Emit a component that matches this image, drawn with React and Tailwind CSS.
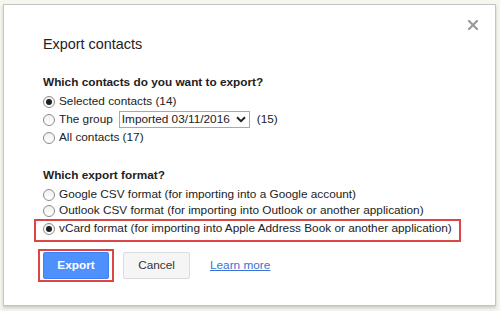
import React from "react";

function Radio({ checked }) {
  return (
    <span className="w-[12px] h-[12px] rounded-full border border-[#8c8c8c] bg-gradient-to-b from-[#f0f0f0] to-white flex items-center justify-center shrink-0">
      {checked && <span className="w-[6px] h-[6px] rounded-full bg-[#1f1f1f]" />}
    </span>
  );
}

function Option({ checked, children, className = "h-[17px]" }) {
  return (
    <div className={`flex items-center gap-[4px] ${className}`}>
      <Radio checked={checked} />
      <span className="leading-none">{children}</span>
    </div>
  );
}

export default function App() {
  return (
    <div
      className="w-[500px] h-[311px] bg-[#f6f6ef] pt-[4px] pl-[3px] overflow-hidden text-[#222] text-[11.8px]"
      style={{ fontFamily: '"Liberation Sans", Arial, sans-serif' }}
    >
      <div className="relative w-[493px] h-[302px] bg-white border border-[#c4c4c4] shadow-[0_2px_3px_rgba(0,0,0,0.18)] pl-[39px] pt-[30px]">
        <svg className="absolute left-[464px] top-[15px]" width="10" height="10" viewBox="0 0 10 10">
          <path d="M1 1 L9 9 M9 1 L1 9" stroke="#9a9a9a" strokeWidth="2.2" strokeLinecap="square" />
        </svg>

        <div className="h-[18px] leading-[18px] text-[14.4px]">Export contacts</div>

        <div className="mt-[22px] h-[14px] leading-[14px] font-bold">Which contacts do you want to export?</div>

        <div className="mt-[4px]">
          <Option checked>Selected contacts (14)</Option>
          <div className="flex items-center h-[19px]">
            <Radio />
            <span className="ml-[4px] leading-none">The group</span>
            <div className="ml-[6px] w-[131px] h-[17px] border border-[#a9a9a9] bg-white flex items-center justify-between pl-[2px] pr-[3px]">
              <span className="leading-none">Imported 03/11/2016</span>
              <svg width="10" height="7" viewBox="0 0 10 7">
                <path d="M1 1.2 L5 5.2 L9 1.2" fill="none" stroke="#222" strokeWidth="2" />
              </svg>
            </div>
            <span className="ml-[7px] leading-none">(15)</span>
          </div>
          <Option>All contacts (17)</Option>
        </div>

        <div className="mt-[22px] h-[14px] leading-[14px] font-bold">Which export format?</div>

        <div className="mt-[5px]">
          <Option className="h-[16px]">Google CSV format (for importing into a Google account)</Option>
          <Option className="h-[16px]">Outlook CSV format (for importing into Outlook or another application)</Option>
          <div className="-ml-[9px] w-[427px] h-[23px] border-2 border-[#dd4444] pl-[7px] pb-[3px] flex items-center">
            <Option checked className="h-[16px]">vCard format (for importing into Apple Address Book or another application)</Option>
          </div>
        </div>

        <div className="mt-[7px] flex items-center">
          <div className="-ml-[5px] border-2 border-[#dd4444] px-[3px] py-[1px]">
            <div className="w-[66px] h-[27px] rounded-[2px] bg-[#4d90fe] border border-[#3b82f0] text-white font-bold flex items-center justify-center">
              Export
            </div>
          </div>
          <div className="ml-[9px] w-[67px] h-[27px] rounded-[2px] bg-[#f5f5f5] border border-[#dcdcdc] text-[#333] flex items-center justify-center">
            Cancel
          </div>
          <span className="ml-[20px] text-[#3a72d4] underline">Learn more</span>
        </div>
      </div>
    </div>
  );
}
